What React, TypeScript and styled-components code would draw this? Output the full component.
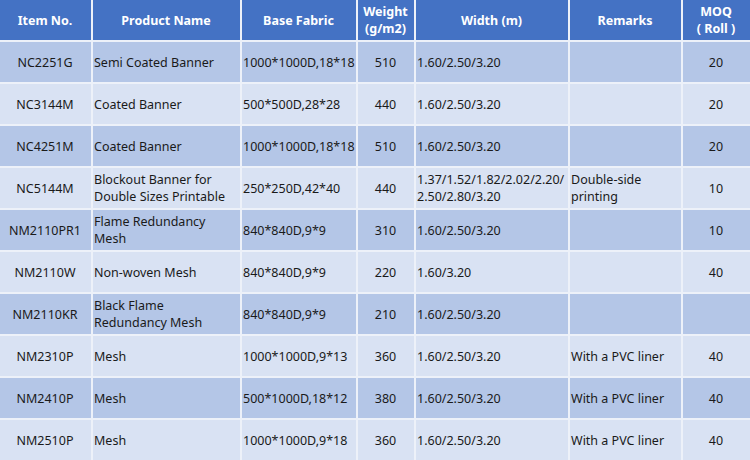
import styled, { createGlobalStyle } from 'styled-components';

const GlobalStyle = createGlobalStyle`
  html, body {
    margin: 0;
    padding: 0;
    background: #ffffff;
  }
  body {
    font-family: "Noto Sans", "Open Sans", Arial, sans-serif;
  }
`;

type Align = 'left' | 'center';
type Tone = 'head' | 'dark' | 'light';

const tones: Record<Tone, string> = {
  head: '#4472c4',
  dark: '#b4c6e7',
  light: '#d9e2f3',
};

const Table = styled.div`
  width: 750px;
  height: 460px;
  display: grid;
  grid-template-columns: 91px 147px 114px 56px 152px 111px 1fr;
  grid-template-rows: repeat(11, 1fr);
  gap: 2px;
  background: #edf1f9;
`;

const Cell = styled.div<{ $align: Align; $tone: Tone }>`
  display: flex;
  align-items: center;
  justify-content: ${(p) => (p.$align === 'center' ? 'center' : 'flex-start')};
  text-align: ${(p) => p.$align};
  padding: 0 2px 0 1px;
  background: ${(p) => tones[p.$tone]};
  color: ${(p) => (p.$tone === 'head' ? '#ffffff' : '#1a1a1a')};
  font-size: 12.5px;
  font-weight: ${(p) => (p.$tone === 'head' ? 700 : 400)};
  line-height: 17px;
  white-space: pre-line;
`;

const columns: { title: string; align: Align }[] = [
  { title: 'Item No.', align: 'center' },
  { title: 'Product Name', align: 'left' },
  { title: 'Base Fabric', align: 'left' },
  { title: 'Weight\n(g/m2)', align: 'center' },
  { title: 'Width (m)', align: 'left' },
  { title: 'Remarks', align: 'left' },
  { title: 'MOQ\n( Roll )', align: 'center' },
];

const rows: string[][] = [
  ['NC2251G', 'Semi Coated Banner', '1000*1000D,18*18', '510', '1.60/2.50/3.20', '', '20'],
  ['NC3144M', 'Coated Banner', '500*500D,28*28', '440', '1.60/2.50/3.20', '', '20'],
  ['NC4251M', 'Coated Banner', '1000*1000D,18*18', '510', '1.60/2.50/3.20', '', '20'],
  ['NC5144M', 'Blockout Banner for\nDouble Sizes Printable', '250*250D,42*40', '440', '1.37/1.52/1.82/2.02/2.20/\n2.50/2.80/3.20', 'Double-side\nprinting', '10'],
  ['NM2110PR1', 'Flame Redundancy\nMesh', '840*840D,9*9', '310', '1.60/2.50/3.20', '', '10'],
  ['NM2110W', 'Non-woven Mesh', '840*840D,9*9', '220', '1.60/3.20', '', '40'],
  ['NM2110KR', 'Black Flame\nRedundancy Mesh', '840*840D,9*9', '210', '1.60/2.50/3.20', '', ''],
  ['NM2310P', 'Mesh', '1000*1000D,9*13', '360', '1.60/2.50/3.20', 'With a PVC liner', '40'],
  ['NM2410P', 'Mesh', '500*1000D,18*12', '380', '1.60/2.50/3.20', 'With a PVC liner', '40'],
  ['NM2510P', 'Mesh', '1000*1000D,9*18', '360', '1.60/2.50/3.20', 'With a PVC liner', '40'],
];

export default function App() {
  return (
    <>
      <GlobalStyle />
      <Table>
        {columns.map((c) => (
          <Cell key={c.title} $align="center" $tone="head">
            {c.title}
          </Cell>
        ))}
        {rows.map((row, i) =>
          row.map((value, j) => (
            <Cell key={`${i}-${j}`} $align={columns[j].align} $tone={i % 2 === 0 ? 'dark' : 'light'}>
              {value}
            </Cell>
          ))
        )}
      </Table>
    </>
  );
}
